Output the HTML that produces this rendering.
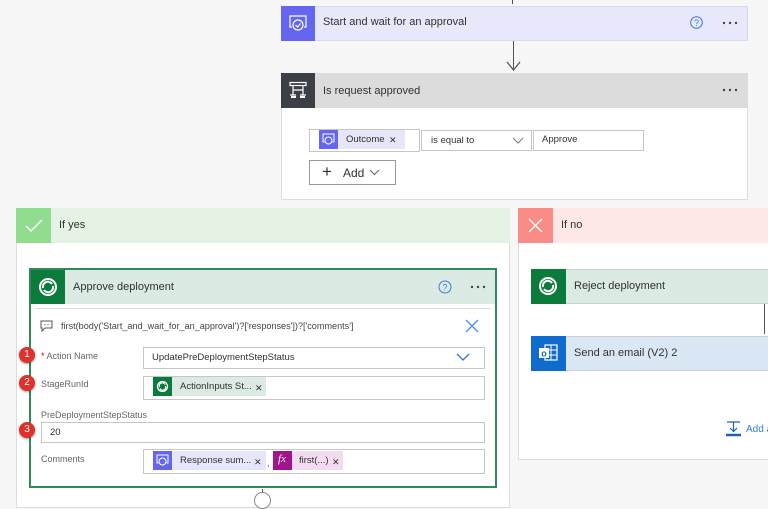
<!DOCTYPE html>
<html><head><meta charset="utf-8"><style>
body{margin:0;width:768px;height:500px;overflow:hidden;background:#f7f7f7;font-family:"Segoe UI","Liberation Sans",sans-serif;color:#323130;position:relative;font-size:11px}
.a{position:absolute;box-sizing:border-box}
.t{position:absolute;white-space:nowrap}
.box{position:absolute;box-sizing:border-box;background:#fff;border:1px solid #c8c6c4}
.x{position:absolute;font-size:9px;color:#333}
.badge{position:absolute;width:16px;height:16px;border-radius:50%;background:#e0302a;color:#fff;font-size:10px;text-align:center;line-height:16px;box-shadow:0 1px 2px rgba(0,0,0,.4)}
.ti{font-size:11px}
.f{font-size:9.5px}
.l{font-size:9px;color:#666}
</style></head><body>
<div class="a" style="left:512px;top:0;width:1px;height:4px;background:#555"></div>
<!-- Start approval card -->
<div class="a" style="left:281px;top:6px;width:467px;height:35px;background:#e8e8fb;border:1px solid #d8d8ee"></div>
<div class="a" style="left:281px;top:6px;width:34px;height:35px;background:#6466ef"></div>
<svg class="a" style="left:287px;top:13px" width="22" height="20" viewBox="0 0 22 20" fill="none" stroke="#fff" stroke-width="1.2"><path d="M5 14H3V3h16v11h-2"/><circle cx="11" cy="12" r="5"/><path d="M8.5 12l2 2 3-3.5"/></svg>
<div class="t ti" style="left:323px;top:16px">Start and wait for an approval</div>
<svg class="a" style="left:690px;top:16px" width="13" height="13"><circle cx="6.5" cy="6.5" r="5.8" fill="none" stroke="#3a7be0" stroke-width="1"/><text x="6.5" y="10" font-size="9" text-anchor="middle" fill="#3a7be0" font-family="Liberation Sans">?</text></svg>
<svg class="a" style="left:722px;top:21px" width="16" height="4"><circle cx="2" cy="2" r="1.2" fill="#444"/><circle cx="8" cy="2" r="1.2" fill="#444"/><circle cx="14" cy="2" r="1.2" fill="#444"/></svg>
<div class="a" style="left:513px;top:41px;width:1px;height:30px;background:#555"></div>
<svg class="a" style="left:506px;top:61px" width="15" height="11"><path d="M1 1l6.5 8 6.5-8" fill="none" stroke="#555" stroke-width="1.3"/></svg>
<!-- condition card -->
<div class="a" style="left:281px;top:73px;width:467px;height:127px;background:#fff;border:1px solid #ddd"></div>
<div class="a" style="left:281px;top:73px;width:467px;height:35px;background:#dcdcdc"></div>
<div class="a" style="left:281px;top:73px;width:34px;height:35px;background:#3b3f46"></div>
<svg class="a" style="left:288px;top:81px" width="20" height="20" fill="none" stroke="#fff" stroke-width="1.2"><rect x="2" y="1.5" width="16" height="3"/><path d="M5 4.5v9M15 4.5v9M5 9h10M2 14h6M12 14h6"/><path d="M3 16h5M12 16h5" stroke-width="2"/></svg>
<div class="t ti" style="left:323px;top:85px">Is request approved</div>
<svg class="a" style="left:722px;top:88px" width="16" height="4"><circle cx="2" cy="2" r="1.2" fill="#444"/><circle cx="8" cy="2" r="1.2" fill="#444"/><circle cx="14" cy="2" r="1.2" fill="#444"/></svg>
<div class="box" style="left:309px;top:129px;width:111px;height:23px"></div>
<div class="a" style="left:319px;top:130px;width:86px;height:19px;background:#e6e6fa"></div>
<div class="a" style="left:319px;top:130px;width:19px;height:19px;background:#6466ef"></div>
<svg class="a" style="left:321px;top:132px" width="15" height="15" fill="none" stroke="#fff" stroke-width="1"><path d="M3.5 10H2V2h11v8h-1.5"/><circle cx="7.5" cy="8.5" r="3.5"/></svg>
<div class="t f" style="left:346px;top:134px">Outcome</div>
<div class="x" style="left:389px;top:135px">✕</div>
<div class="box" style="left:421px;top:130px;width:111px;height:21px"></div>
<div class="t f" style="left:431px;top:135px">is equal to</div>
<svg class="a" style="left:512px;top:137px" width="12" height="8"><path d="M1 1l5 5 5-5" fill="none" stroke="#777"/></svg>
<div class="box" style="left:533px;top:130px;width:111px;height:21px"></div>
<div class="t f" style="left:542px;top:134px">Approve</div>
<div class="box" style="left:309px;top:160px;width:87px;height:25px;border-color:#999"></div>
<div class="t" style="left:322px;top:162px;font-size:17px;font-weight:300">+</div>
<div class="t" style="left:343px;top:166px;font-size:12px">Add</div>
<svg class="a" style="left:369px;top:169px" width="11" height="7"><path d="M1 1l4.5 4.5 4.5-4.5" fill="none" stroke="#666"/></svg>
<!-- If yes -->
<div class="a" style="left:16px;top:208px;width:494px;height:300px;background:#fff;border:1px solid #ddd"></div>
<div class="a" style="left:16px;top:208px;width:494px;height:35px;background:#e4f3e4"></div>
<div class="a" style="left:16px;top:208px;width:35px;height:35px;background:#8fdc8f"></div>
<svg class="a" style="left:24px;top:217px" width="20" height="17"><path d="M2 9l5 5 11-11" fill="none" stroke="#fff" stroke-width="1.5"/></svg>
<div class="t ti" style="left:59px;top:219px">If yes</div>
<!-- Approve deployment -->
<div class="a" style="left:29px;top:268px;width:468px;height:220px;background:#fff;border:2px solid #2e8b57"></div>
<div class="a" style="left:31px;top:270px;width:464px;height:34px;background:#dbebe3"></div>
<div class="a" style="left:31px;top:270px;width:34px;height:34px;background:#0b7a3a"></div>
<svg class="a" style="left:37px;top:276px" width="22" height="22" fill="none" stroke="#fff" stroke-width="2"><circle cx="11" cy="11" r="8"/><path d="M6 12a5 5 0 0 1 9-4"/><path d="M16 10a5 5 0 0 1-9 4"/></svg>
<div class="t ti" style="left:73px;top:281px">Approve deployment</div>
<svg class="a" style="left:438px;top:280px" width="14" height="14"><circle cx="7" cy="7" r="6" fill="none" stroke="#3a7be0" stroke-width="1"/><text x="7" y="10.5" font-size="9" text-anchor="middle" fill="#3a7be0" font-family="Liberation Sans">?</text></svg>
<svg class="a" style="left:470px;top:285px" width="16" height="4"><circle cx="2" cy="2" r="1.2" fill="#444"/><circle cx="8" cy="2" r="1.2" fill="#444"/><circle cx="14" cy="2" r="1.2" fill="#444"/></svg>
<div class="a" style="left:34px;top:308px;width:457px;height:1px;background:#ddd"></div>
<svg class="a" style="left:40px;top:320px" width="13" height="12" fill="none" stroke="#555"><path d="M1 1h11v7H5l-3 3V8H1z"/><path d="M5 4v1M8 4v1"/></svg>
<div class="t" style="left:61px;top:321px;font-size:9.1px;color:#444">first(body('Start_and_wait_for_an_approval')?['responses'])?['comments']</div>
<svg class="a" style="left:465px;top:319px" width="14" height="14"><path d="M1 1l12 12M13 1L1 13" stroke="#4d8ef2" stroke-width="1.3"/></svg>
<div class="badge" style="left:19px;top:347px">1</div>
<div class="t l" style="left:41px;top:351px"><span style="color:#c00">*</span> Action Name</div>
<div class="box" style="left:143px;top:347px;width:342px;height:22px"></div>
<div class="t f" style="left:152px;top:352px">UpdatePreDeploymentStepStatus</div>
<svg class="a" style="left:456px;top:353px" width="14" height="9"><path d="M1 1l6 6 6-6" fill="none" stroke="#2f6fe0" stroke-width="1.3"/></svg>
<div class="badge" style="left:19px;top:375px">2</div>
<div class="t l" style="left:41px;top:379px">StageRunId</div>
<div class="box" style="left:143px;top:376px;width:342px;height:24px"></div>
<div class="a" style="left:153px;top:377px;width:113px;height:19px;background:#dbebe3"></div>
<div class="a" style="left:153px;top:377px;width:19px;height:19px;background:#0b7a3a"></div>
<svg class="a" style="left:156px;top:380px" width="13" height="13" fill="none" stroke="#fff" stroke-width="1.3"><circle cx="6.5" cy="6.5" r="5"/><path d="M3.5 7a3 3 0 0 1 5.5-2.5"/><path d="M9.5 6a3 3 0 0 1-5.5 2.5"/></svg>
<div class="t f" style="left:180px;top:381px">ActionInputs St...</div>
<div class="x" style="left:255px;top:383px">✕</div>
<div class="t l" style="left:41px;top:410px">PreDeploymentStepStatus</div>
<div class="badge" style="left:19px;top:422px">3</div>
<div class="box" style="left:41px;top:422px;width:444px;height:21px"></div>
<div class="t f" style="left:50px;top:427px">20</div>
<div class="t l" style="left:41px;top:454px">Comments</div>
<div class="box" style="left:143px;top:449px;width:342px;height:25px"></div>
<div class="a" style="left:153px;top:451px;width:113px;height:19px;background:#e6e6fa"></div>
<div class="a" style="left:153px;top:451px;width:19px;height:19px;background:#6466ef"></div>
<svg class="a" style="left:155px;top:453px" width="15" height="15" fill="none" stroke="#fff" stroke-width="1"><path d="M3.5 10H2V2h11v8h-1.5"/><circle cx="7.5" cy="8.5" r="3.5"/></svg>
<div class="t f" style="left:180px;top:455px">Response sum...</div>
<div class="x" style="left:254px;top:457px">✕</div>
<div class="t" style="left:267px;top:458px;font-size:9px;color:#666">,</div>
<div class="a" style="left:273px;top:451px;width:70px;height:19px;background:#f3dcef"></div>
<div class="a" style="left:273px;top:451px;width:19px;height:19px;background:#a0158d"></div>
<div class="t" style="left:278px;top:453px;color:#fff;font-style:italic;font-family:'Liberation Serif',serif;font-size:11px">fx</div>
<div class="t f" style="left:299px;top:455px">first(...)</div>
<div class="x" style="left:332px;top:457px">✕</div>
<div class="a" style="left:262px;top:489px;width:1px;height:5px;background:#555"></div>
<div class="a" style="left:254px;top:492px;width:17px;height:17px;border-radius:50%;border:1px solid #888;background:#fff"></div>
<!-- If no -->
<div class="a" style="left:518px;top:208px;width:260px;height:252px;background:#fff;border:1px solid #ddd"></div>
<div class="a" style="left:518px;top:208px;width:260px;height:35px;background:#fde7e7"></div>
<div class="a" style="left:518px;top:208px;width:35px;height:35px;background:#f98c86"></div>
<svg class="a" style="left:527px;top:217px" width="17" height="17"><path d="M2 2l13 13M15 2L2 15" stroke="#fff" stroke-width="1.3"/></svg>
<div class="t ti" style="left:561px;top:219px">If no</div>
<div class="a" style="left:531px;top:269px;width:250px;height:35px;background:#dbebe3;border:1px solid #d0d0d0"></div>
<div class="a" style="left:531px;top:269px;width:35px;height:35px;background:#0b7a3a"></div>
<svg class="a" style="left:537px;top:275px" width="22" height="22" fill="none" stroke="#fff" stroke-width="2"><circle cx="11" cy="11" r="8"/><path d="M6 12a5 5 0 0 1 9-4"/><path d="M16 10a5 5 0 0 1-9 4"/></svg>
<div class="t ti" style="left:574px;top:280px">Reject deployment</div>
<div class="a" style="left:764px;top:304px;width:1px;height:30px;background:#555"></div>
<div class="a" style="left:531px;top:336px;width:250px;height:35px;background:#dae8f6;border:1px solid #d0d0d0"></div>
<div class="a" style="left:531px;top:336px;width:35px;height:35px;background:#0f6cce"></div>
<svg class="a" style="left:537px;top:342px" width="22" height="22"><rect x="8" y="3" width="12" height="15" fill="none" stroke="#fff" stroke-width="1.2"/><path d="M8 8h12M8 13h12M14 3v15" stroke="#fff" stroke-width="1"/><rect x="2" y="6" width="10" height="10" fill="#fff"/><text x="7" y="14.5" font-size="9" font-weight="bold" text-anchor="middle" fill="#0f6cce" font-family="Liberation Sans">o</text></svg>
<div class="t ti" style="left:574px;top:347px">Send an email (V2) 2</div>
<svg class="a" style="left:725px;top:421px" width="17" height="16" fill="none" stroke="#1f5fb8" stroke-width="1.2"><path d="M2 1h13M8.5 1v9M5 7l3.5 3.5L12 7"/><path d="M1 14h15" stroke-width="2.5"/></svg>
<div class="t" style="left:746px;top:424px;color:#3a7be0;font-size:10px">Add a</div>
</body></html>
